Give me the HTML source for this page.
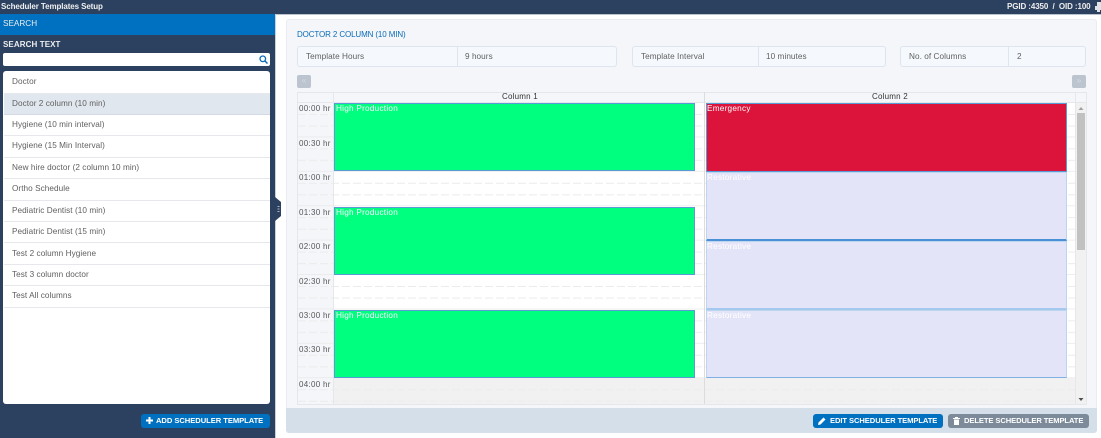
<!DOCTYPE html>
<html><head><meta charset="utf-8">
<style>
*{box-sizing:border-box}
html,body{margin:0;padding:0;width:1101px;height:438px;overflow:hidden;background:#fff;font-family:"Liberation Sans",sans-serif;color:#555}
div,span,svg{position:absolute}
.t{white-space:nowrap;font-size:8.2px;line-height:10px;letter-spacing:.06px;color:#5f5f5f}
.it{left:1px;width:266px;height:21.4px;border-bottom:1px solid #e6e8ec}
.it .t{left:8px;top:5px}
.box{top:46px;height:21px;background:#f5f9fd;border:1px solid #dfe5ee;border-radius:3px}
.box i{position:absolute;top:0;bottom:0;width:1px;background:#dfe5ee}
.hr{left:299px;font-size:8px;letter-spacing:.3px;color:#555;white-space:nowrap;line-height:10px}
.b{border:1px solid #5b9bd5}
.lab{left:1px;top:0;font-size:8.2px;line-height:10px;letter-spacing:.25px;color:#fff;white-space:nowrap}
.btn{height:14px;border-radius:3px;color:#fff;font-size:7.6px;font-weight:bold;line-height:14px;white-space:nowrap;letter-spacing:-.05px}
</style></head><body>
<div style="left:0;top:0;width:1101px;height:14px;background:#2c4160"></div>
<div style="left:0;top:14px;width:1101px;height:1px;background:#b9c2cd"></div>
<div class="t" style="left:1px;top:2px;color:#eee;font-weight:bold;font-size:8px;letter-spacing:-.1px">Scheduler Templates Setup</div>
<div class="t" style="left:1007px;top:2px;color:#eee;font-weight:bold;font-size:8px;letter-spacing:-.1px">PGID :4350 &nbsp;/&nbsp; OID :100</div>
<svg style="left:1095px;top:2px" width="6" height="10" viewBox="0 0 6 10"><path d="M2 0h4v4H2zM0 4h6v4H5v2H2V8H0z" fill="#dfe3e8"/></svg>

<div style="left:0;top:15px;width:275px;height:423px;background:#2c4160"></div>
<div style="left:0;top:14px;width:275px;height:21px;background:#0070c0"></div>
<div class="t" style="left:3px;top:19px;color:#eee;font-size:8.2px;letter-spacing:0">SEARCH</div>
<div class="t" style="left:3px;top:40px;color:#eee;font-weight:bold;font-size:8px;letter-spacing:.1px">SEARCH TEXT</div>
<div style="left:3px;top:53px;width:267px;height:13px;background:#fff;border-radius:2px"></div>
<svg style="left:259px;top:55px" width="9" height="9" viewBox="0 0 9 9"><circle cx="3.800" cy="3.800" r="2.800" fill="none" stroke="#0a6cb8" stroke-width="1.300"/><path d="M6 6l2.500 2.500" stroke="#0a6cb8" stroke-width="1.500"/></svg>

<div style="left:3px;top:71px;width:267px;height:333px;background:#fff;border-radius:3px;overflow:hidden">
 <div class="it" style="top:1px;height:22px"><div class="t" style="top:5px">Doctor</div></div>
 <div class="it" style="top:23px;background:#e1e7ef;height:21px;border-bottom:1px solid #d3dae6"><div class="t" style="top:5px">Doctor 2 column (10 min)</div></div>
 <div class="it" style="top:44px"><div class="t">Hygiene (10 min interval)</div></div>
 <div class="it" style="top:65.400px"><div class="t">Hygiene (15 Min Interval)</div></div>
 <div class="it" style="top:86.800px"><div class="t">New hire doctor (2 column 10 min)</div></div>
 <div class="it" style="top:108.200px"><div class="t">Ortho Schedule</div></div>
 <div class="it" style="top:129.600px"><div class="t">Pediatric Dentist (10 min)</div></div>
 <div class="it" style="top:151px"><div class="t">Pediatric Dentist (15 min)</div></div>
 <div class="it" style="top:172.400px"><div class="t" style="top:6px">Test 2 column Hygiene</div></div>
 <div class="it" style="top:193.800px"><div class="t">Test 3 column doctor</div></div>
 <div class="it" style="top:215.200px"><div class="t">Test All columns</div></div>
</div>
<div class="btn" style="left:141px;top:414px;width:129px;background:#0070c0"><span style="left:15px;top:0">ADD SCHEDULER TEMPLATE</span></div>
<svg style="left:146px;top:417px" width="7" height="7" viewBox="0 0 7 7"><path d="M2.500 0h2v2.500H7v2H4.500V7h-2V4.500H0v-2h2.500z" fill="#fff"/></svg>

<div style="left:275px;top:14px;width:1px;height:424px;background:#c9d0da"></div>
<svg style="left:275px;top:197px" width="7" height="24" viewBox="0 0 7 24"><path d="M0 0L6 5V19L0 24z" fill="#2c4160"/><path d="M2.500 9h2v1h-2zM2.500 11.500h2v1h-2zM2.500 14h2v1h-2z" fill="#aab6c6"/></svg>

<div style="left:286px;top:19px;width:811px;height:414px;background:#f4f6f9;border:1px solid #e9ecf1;border-radius:3px"></div>
<div style="left:286px;top:408px;width:811px;height:25px;background:#d5dfe9;border-radius:0 0 3px 3px"></div>
<div class="t" style="left:297px;top:30px;color:#0a6cb8;font-size:8px;letter-spacing:-.12px">DOCTOR 2 COLUMN (10 MIN)</div>

<div class="box" style="left:297px;width:320px"><i style="left:159px"></i></div>
<div class="t" style="left:306px;top:52px">Template Hours</div>
<div class="t" style="left:465px;top:52px">9 hours</div>
<div class="box" style="left:632px;width:254px"><i style="left:125px"></i></div>
<div class="t" style="left:641px;top:52px">Template Interval</div>
<div class="t" style="left:766px;top:52px">10 minutes</div>
<div class="box" style="left:900px;width:186px"><i style="left:107px"></i></div>
<div class="t" style="left:909px;top:52px">No. of Columns</div>
<div class="t" style="left:1017px;top:52px">2</div>

<div style="left:297px;top:75px;width:14px;height:13px;background:#bcc5cf;border-radius:2px;color:#d5dae0;font-size:8px;line-height:12px;text-align:center">«</div>
<div style="left:1072px;top:75px;width:14px;height:13px;background:#bcc5cf;border-radius:2px;color:#d5dae0;font-size:8px;line-height:12px;text-align:center">»</div>

<div style="left:297px;top:92px;width:790px;height:313px;background:#fff;border:1px solid #e5e7ea"></div>
<div style="left:298px;top:93px;width:788px;height:10px;background:#f4f6f9;border-bottom:1px solid #e5e7ea"></div>
<div style="left:298px;top:103px;width:35px;height:301px;background:#f4f6f9"></div>
<div style="left:333px;top:378px;width:742px;height:26px;background:#f1f1f1"></div>
<svg style="left:298px;top:103px" width="777" height="301" viewBox="0 0 777 301">
<defs><pattern id="p" width="777" height="34.400" patternUnits="userSpaceOnUse">
<path d="M0 11.500H777M0 23H777" stroke="#ececec" stroke-width="1" stroke-dasharray="8 3"/>
<path d="M0 34H777" stroke="#ebebeb" stroke-width="1"/>
</pattern></defs>
<rect width="777" height="301" fill="url(#p)"/>
</svg>
<div style="left:333px;top:92px;width:1px;height:312px;background:#e5e7ea"></div>
<div style="left:704px;top:92px;width:1px;height:312px;background:#dcdcdc"></div>
<div style="left:1075px;top:92px;width:1px;height:312px;background:#e5e7ea"></div>
<div class="t" style="left:502px;top:92px;color:#333;font-size:8px;letter-spacing:.2px">Column 1</div>
<div class="t" style="left:872px;top:92px;color:#333;font-size:8px;letter-spacing:.2px">Column 2</div>

<div class="hr" style="top:104px">00:00 hr</div>
<div class="hr" style="top:139px">00:30 hr</div>
<div class="hr" style="top:173px">01:00 hr</div>
<div class="hr" style="top:208px">01:30 hr</div>
<div class="hr" style="top:242px">02:00 hr</div>
<div class="hr" style="top:277px">02:30 hr</div>
<div class="hr" style="top:311px">03:00 hr</div>
<div class="hr" style="top:345px">03:30 hr</div>
<div class="hr" style="top:380px">04:00 hr</div>

<div class="b" style="left:334px;top:103px;width:361px;height:68px;background:#00ff7f"><div class="lab">High Production</div></div>
<div class="b" style="left:334px;top:207px;width:361px;height:68px;background:#00ff7f"><div class="lab">High Production</div></div>
<div class="b" style="left:334px;top:310px;width:361px;height:68px;background:#00ff7f"><div class="lab">High Production</div></div>
<div class="b" style="left:706px;top:103px;width:361px;height:69px;background:#dc143c"><div class="lab" style="left:0">Emergency</div></div>
<div style="left:706px;top:172px;width:361px;height:69px;background:#e4e4f9;border:1px solid #bcd6f2;border-bottom:2px solid #4a90d6"><div class="lab" style="left:0">Restorative</div></div>
<div style="left:706px;top:241px;width:361px;height:69px;background:#e4e4f9;border:1px solid #bcd6f2;border-bottom:2px solid #a5c8ee"><div class="lab" style="left:0">Restorative</div></div>
<div style="left:706px;top:310px;width:361px;height:68px;background:#e4e4f9;border:1px solid #bcd6f2;border-bottom:1px solid #7fb0e4"><div class="lab" style="left:0">Restorative</div></div>

<div style="left:1076px;top:103px;width:10px;height:301px;background:#f1f1f1"></div>
<div style="left:1077px;top:113px;width:8px;height:137px;background:#c1c1c1"></div>
<svg style="left:1076px;top:105px" width="10" height="6" viewBox="0 0 10 6"><path d="M5 2l2.500 3h-5z" fill="#a0a0a0"/></svg>
<svg style="left:1076px;top:396px" width="10" height="6" viewBox="0 0 10 6"><path d="M5 5L2.500 2h5z" fill="#505050"/></svg>

<div class="btn" style="left:813px;top:414px;width:130px;background:#0070c0"><span style="left:17px;top:0;letter-spacing:-.08px">EDIT SCHEDULER TEMPLATE</span></div>
<svg style="left:818px;top:417px" width="8" height="8" viewBox="0 0 8 8"><path d="M0 8l.5-2.500L5.500.5l2 2-5 5z" fill="#fff"/></svg>
<div class="btn" style="left:948px;top:414px;width:141px;background:#7c8a99"><span style="left:16px;top:0;letter-spacing:-.1px">DELETE SCHEDULER TEMPLATE</span></div>
<svg style="left:953px;top:417px" width="7" height="8" viewBox="0 0 7 8"><path d="M0 1h2V0h3v1h2v1H0zM1 2.500h5V8H1z" fill="#fff"/></svg>
</body></html>
